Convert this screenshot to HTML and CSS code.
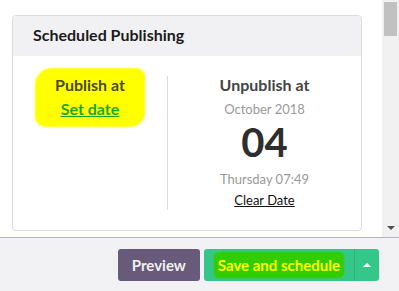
FILE: index.html
```html
<!DOCTYPE html>
<html>
<head>
  <title>Scheduled Publishing</title>
  <link rel="stylesheet" href="styles.css">
</head>
<body>

  <div class="page">
    <div class="scroll-area">
      <div class="content">
        <div class="card">
          <div class="card-header">Scheduled Publishing</div>
          <div class="card-body">
            <div class="col col-publish">
              <div class="marker">
                <div class="col-title">Publish at</div>
                <a class="set-date" href="#">Set date</a>
              </div>
            </div>
            <div class="divider"></div>
            <div class="col col-unpublish">
              <div class="col-title">Unpublish at</div>
              <div class="month">October 2018</div>
              <div class="day">04</div>
              <div class="time">Thursday 07:49</div>
              <a class="clear-date" href="#">Clear Date</a>
            </div>
          </div>
        </div>
      </div>
      <div class="scrollbar">
        <div class="thumb"></div>
        <div class="arrow-down"></div>
      </div>
    </div>

    <div class="footer">
      <button class="btn btn-preview">Preview</button>
      <div class="btn-group">
        <button class="btn btn-save"><span class="save-mark">Save and schedule</span></button>
        <button class="btn btn-caret"><span class="caret-up"></span></button>
      </div>
    </div>
  </div>

</body>
</html>
```

FILE: styles.css
```css
body {
  margin: 0;
  font-family: Lato, "Open Sans", sans-serif;
  color: #333;
  background: #fff;
}

.page {
  width: 399px;
  height: 291px;
  display: flex;
  flex-direction: column;
}

.scroll-area {
  height: 237px;
  display: flex;
  background: #fff;
}

.content {
  flex: 1;
  padding: 15px 20px 0 12px;
}

/* card */
.card {
  height: 216px;
  box-sizing: border-box;
  border: 1px solid #dcdcdc;
  border-radius: 4px;
  display: flex;
  flex-direction: column;
  overflow: hidden;
}

.card-header {
  background: #f1f1f3;
  padding: 7px 20px 9px;
  font-size: 16px;
  line-height: 24px;
  font-weight: bold;
  color: #1b1b1b;
}

.card-body {
  flex: 1;
  display: grid;
  grid-template-columns: 154px 1px 1fr;
  padding-top: 17px;
}

.col {
  text-align: center;
}

.col-title {
  font-size: 16px;
  line-height: 24px;
  font-weight: bold;
  color: #444;
}

.divider {
  margin-top: 3px;
  height: 134px;
  background: #dcdcdc;
}

/* the yellow marker drawn over the left column */
.marker {
  display: inline-block;
  margin-top: -4px;
  padding: 4px 19px 5px;
  background: #ffff00;
  border-radius: 16px 8px 14px 10px;
  box-shadow: 0 0 2px 1px #ffff00;
}

.marker .col-title {
  color: #4a4a12;
}

.set-date {
  display: block;
  font-size: 16px;
  line-height: 24px;
  font-weight: bold;
  color: #1fa51f;
  text-decoration: underline;
}

.month,
.time {
  font-size: 13px;
  line-height: 20px;
  color: #9a9a9a;
}

.month {
  margin-top: 2px;
}

.day {
  margin-top: 3px;
  font-size: 40px;
  line-height: 40px;
  font-weight: bold;
  color: #2e2e2e;
}

.time {
  margin-top: 7px;
}

.clear-date {
  display: block;
  margin-top: 1px;
  font-size: 13px;
  line-height: 20px;
  color: #111;
  text-decoration: underline;
}

/* fake scrollbar */
.scrollbar {
  width: 17px;
  background: #f1f1f1;
  display: flex;
  flex-direction: column;
  align-items: center;
}

.thumb {
  margin-top: 2px;
  width: 13px;
  height: 34px;
  background: #c1c1c1;
}

.arrow-down {
  margin-top: auto;
  margin-bottom: 7px;
  width: 0;
  height: 0;
  border-left: 4px solid transparent;
  border-right: 4px solid transparent;
  border-top: 4px solid #505050;
}

/* footer */
.footer {
  border-top: 1px solid #b8b2c6;
  background: #f2f2f4;
  flex: 1;
  display: flex;
  justify-content: flex-end;
  align-items: flex-start;
  gap: 4px;
  padding: 11px 20px 0 0;
}

.btn {
  height: 32px;
  border: none;
  border-radius: 3px;
  font-family: Lato, "Open Sans", sans-serif;
  font-size: 15px;
  font-weight: bold;
  color: #f0f0f0;
  cursor: pointer;
}

.btn-preview {
  padding: 0 14px;
  background: #675a7a;
}

.btn-group {
  display: flex;
}

.btn-save {
  padding: 0 11px 0 11px;
  background: #35c78a;
  border-radius: 3px 0 0 3px;
}

.save-mark {
  display: inline-block;
  padding: 2px 3px;
  line-height: 20px;
  background: #33cc00;
  color: #ffff00;
  border-radius: 4px;
  box-shadow: 0 0 2px 1px #33cc00;
}

.btn-caret {
  width: 25px;
  padding: 0;
  background: #35c78a;
  border-left: 1px solid #2fb079;
  border-radius: 0 3px 3px 0;
  display: flex;
  align-items: center;
  justify-content: center;
}

.caret-up {
  width: 0;
  height: 0;
  border-left: 4px solid transparent;
  border-right: 4px solid transparent;
  border-bottom: 4px solid #fff;
}
```
